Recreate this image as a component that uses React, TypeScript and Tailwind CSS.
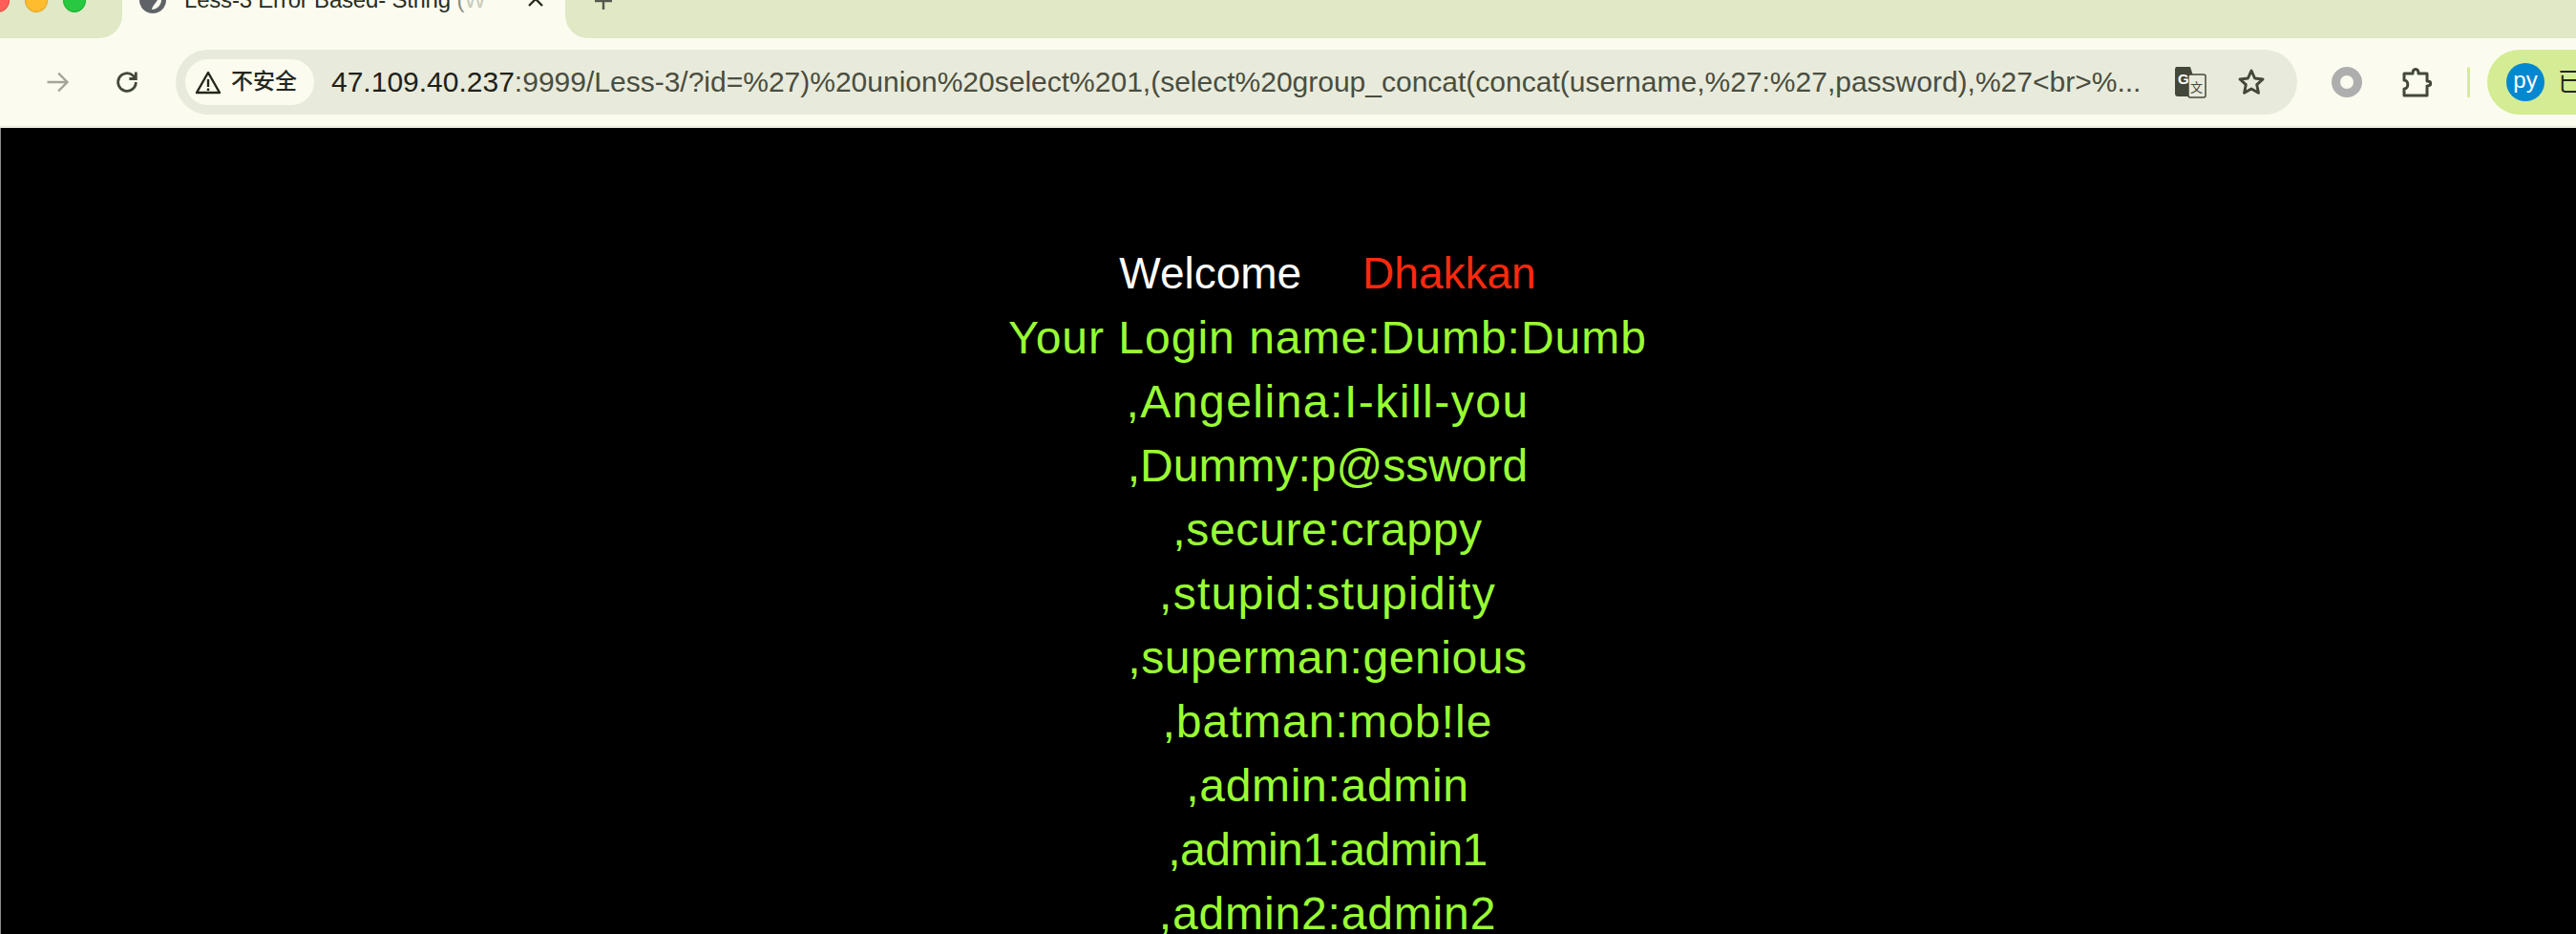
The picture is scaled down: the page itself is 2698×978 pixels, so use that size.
// tracking per line stands in for the wider Mac font of the shot
const lines = [
  { text: "Your Login name:Dumb:Dumb", tracking: "tracking-[1px]" },
  { text: ",Angelina:I-kill-you", tracking: "tracking-[1.5px]" },
  { text: ",Dummy:p@ssword", tracking: "tracking-[0px]" },
  { text: ",secure:crappy", tracking: "tracking-[0.7px]" },
  { text: ",stupid:stupidity", tracking: "tracking-[1.3px]" },
  { text: ",superman:genious", tracking: "tracking-[0.6px]" },
  { text: ",batman:mob!le", tracking: "tracking-[1.1px]" },
  { text: ",admin:admin", tracking: "tracking-[0.7px]" },
  { text: ",admin1:admin1", tracking: "tracking-[-0.5px]" },
  { text: ",admin2:admin2", tracking: "tracking-[0.85px]" },
]

function Globe() {
  return (
    <svg width="28" height="28" viewBox="0 0 28 28" className="shrink-0">
      <circle cx="14" cy="14" r="14" fill="#5f6368" />
      <path d="M14 4c5 2 7 6 5 10s-5 5-6 10c4 0 9-3 10-9 0-5-4-10-9-11z" fill="#fbfcef" />
    </svg>
  )
}

function TranslateIcon() {
  return (
    <svg width="34" height="34" viewBox="0 0 34 34" className="shrink-0">
      <path d="M2 1h15l10 31H4a3 3 0 0 1-3-3V3z" fill="#44483a" />
      <rect x="15" y="9" width="18" height="24" rx="2" fill="#e8ebdb" stroke="#44483a" strokeWidth="1.5" />
      <text x="4" y="19" fontSize="15" fontWeight="700" fill="#fff" fontFamily="Liberation Sans, sans-serif">G</text>
      <text x="17" y="27" fontSize="13" fill="#44483a" fontFamily="Noto Sans CJK SC, sans-serif">文</text>
    </svg>
  )
}

export default function App() {
  return (
    <div className="w-[2698px] h-[978px] overflow-hidden flex flex-col bg-black font-['Liberation_Sans','Noto_Sans_CJK_SC',sans-serif]">
      {/* tab strip, the top of it is cut off in the shot */}
      <div className="h-10 shrink-0 flex bg-[#fbfcef] overflow-hidden">
        <div className="w-[142px] shrink-0 bg-[#e0e8c6] rounded-br-[24px] flex items-start gap-4 -ml-[14px]">
          <span className="w-6 h-6 -mt-[11px] rounded-full bg-[#ff5f57] border border-[#e0443e] shrink-0" />
          <span className="w-6 h-6 -mt-[11px] rounded-full bg-[#febc2e] border border-[#dea123] shrink-0" />
          <span className="w-6 h-6 -mt-[11px] rounded-full bg-[#28c840] border border-[#1aab29] shrink-0" />
        </div>
        <div className="w-[464px] shrink-0 flex items-start pl-[18px]">
          <div className="-mt-[14px]"><Globe /></div>
          <span className="ml-[19px] -mt-[16px] w-[334px] overflow-hidden whitespace-nowrap text-[24px] tracking-[-0.2px] leading-[32px] text-[#2a2c24]">
            Less-3 Error Based- String <span className="text-[#8a8c80]">(</span><span className="text-[#c9cbbd]">W</span>
          </span>
          <svg width="16" height="16" viewBox="0 0 16 16" fill="none" stroke="#2a2c24" strokeWidth="2.4" className="ml-[26px] -mt-[9px] shrink-0">
            <path d="M1 1l14 14M15 1L1 15" />
          </svg>
        </div>
        <div className="flex-1 bg-[#e0e8c6] rounded-bl-[24px] pl-[31px]">
          <svg width="18" height="18" viewBox="0 0 18 18" fill="none" stroke="#55584c" strokeWidth="2.4" className="-mt-2">
            <path d="M9 0v18M0 9h18" />
          </svg>
        </div>
      </div>

      {/* toolbar */}
      <div className="h-[94px] shrink-0 flex items-center bg-[#fbfcef] border-b-2 border-[#e8ebdb]">
        <svg width="28" height="28" viewBox="0 0 24 24" fill="none" stroke="#a3a598" strokeWidth="2" className="ml-[46px] shrink-0">
          <path d="M3 12h18M13 4l8 8-8 8" />
        </svg>
        <svg width="28" height="28" viewBox="0 0 24 24" fill="none" stroke="#44483a" strokeWidth="2.4" className="ml-[45px] shrink-0">
          <path d="M20 12a8 8 0 1 1-2.5-5.8L20 8.5" />
          <path d="M20 3v6h-6" />
        </svg>
        <div className="ml-[37px] w-[2222px] h-[68px] shrink-0 rounded-[34px] bg-[#e8ebdb] flex items-center pl-[10px] pr-[32px]">
          <div className="w-[135px] h-12 shrink-0 rounded-[24px] bg-[#fbfcef] flex items-center pl-[10px] gap-[10px]">
            <svg width="28" height="26" viewBox="0 0 28 26" fill="none" stroke="#24261e" strokeWidth="2.4" className="shrink-0">
              <path d="M14 3L2 24h24z" strokeLinejoin="round" />
              <path d="M14 10v8M14 19.5v2.5" />
            </svg>
            <span className="text-[23px] leading-none pb-[2px] font-medium text-[#24261e] whitespace-nowrap">不安全</span>
          </div>
          <div className="ml-[18px] w-[1905px] whitespace-nowrap overflow-hidden text-[30px] leading-10 text-[#4a4d40]">
            <span className="text-[#1f2119]">47.109.40.237</span>:9999/Less-3/?id=%27)%20union%20select%201,(select%20group_concat(concat(username,%27:%27,password),%27&lt;br&gt;%...
          </div>
          <div className="ml-auto flex items-center gap-[31px]">
            <TranslateIcon />
            <svg width="32" height="32" viewBox="0 0 24 24" fill="none" stroke="#44483a" strokeWidth="2.2" strokeLinejoin="round" className="shrink-0">
              <path d="M12 3l2.7 6 6.3.7-4.7 4.3 1.3 6.500L12 17.200 6.400 20.500 7.700 14 3 9.700 9.300 9z" />
            </svg>
          </div>
        </div>
        <span className="ml-[36px] w-8 h-8 shrink-0 rounded-full border-[9px] border-[#aeaeae]" />
        <svg width="32" height="34" viewBox="0 0 32 34" fill="none" stroke="#44483a" strokeWidth="3" strokeLinejoin="round" className="ml-[41px] shrink-0">
          <path d="M3 8h9c0-6 6-6 6 0h9v8c5 0 5 5 0 5v10H3v-7c5 0 5-9 0-9z" />
        </svg>
        <span className="ml-[37px] w-[3px] h-8 shrink-0 rounded bg-[#d4ec94]" />
        <div className="ml-[18px] h-[68px] w-[120px] shrink-0 rounded-l-[34px] bg-[#d4ec94] flex items-center pl-5 gap-[14px]">
          <span className="w-10 h-10 shrink-0 rounded-full bg-[#0288d1] flex items-center justify-center text-[24px] leading-none pb-1 text-white">py</span>
          <span className="text-[26px] leading-none text-[#24261e]">已</span>
        </div>
      </div>

      {/* page */}
      <div className="flex-1 w-[2780px] shrink-0 bg-black border-l border-[#8a8a8a] pt-[119px] text-center text-[48px] leading-[67px] whitespace-pre">
        <div className="text-[46px]">
          <span className="text-white">Welcome     </span>
          <span className="text-[#ff2a0d]">Dhakkan</span>
        </div>
        {lines.map((line) => (
          <div key={line.text} className={`text-[#99ff33] ${line.tracking}`}>{line.text}</div>
        ))}
      </div>
    </div>
  )
}
